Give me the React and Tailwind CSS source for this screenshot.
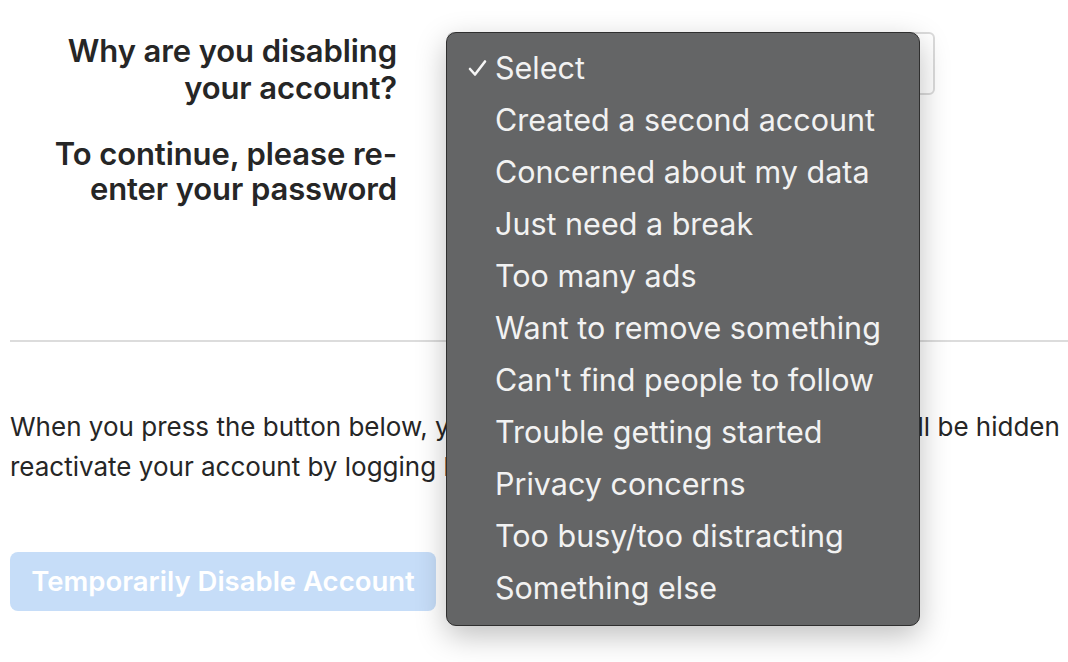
import React from "react";

const REASONS = [
  "Select",
  "Created a second account",
  "Concerned about my data",
  "Just need a break",
  "Too many ads",
  "Want to remove something",
  "Can't find people to follow",
  "Trouble getting started",
  "Privacy concerns",
  "Too busy/too distracting",
  "Something else",
];

const font = { fontFamily: "Inter, 'Liberation Sans', sans-serif" };

export default function App() {
  return (
    <div className="relative h-[662px] w-[1068px] overflow-hidden bg-white text-[#262626]" style={font}>
      {/* form rows */}
      <div className="grid grid-cols-[397px_488px] gap-x-[50px] pt-[32px]">
        <div className="text-right text-[31px] font-semibold leading-[37px] tracking-[-0.1px]">
          Why are you disabling
          <br />
          your account?
        </div>
        <div className="h-[63px] rounded-md border-2 border-[#dbdbdb] bg-white" />
        <div className="mt-[30px] text-right text-[31px] font-semibold leading-[35px] tracking-[-0.1px]">
          To continue, please re-
          <br />
          enter your password
        </div>
        <div />
      </div>

      <div className="ml-[10px] mt-[134px] h-[2px] bg-[#dcdcdc]" />

      <p className="ml-[10px] mt-[65px] whitespace-nowrap text-[26px] leading-[40px]">
        When you press the button below, your photos, comments, and all likes will be hidden
        <br />
        reactivate your account by logging back in.
      </p>

      <button className="ml-[10px] mt-[65px] h-[59px] w-[426px] rounded-lg bg-[#c6ddf8] text-[27.5px] font-semibold text-white">
        Temporarily Disable Account
      </button>

      {/* native select popup */}
      <div className="absolute left-[446px] top-[32px] w-[474px] rounded-[10px] border border-[#2f2f2f] bg-[#646566] pb-[11px] pt-[9px] shadow-[0_10px_30px_rgba(0,0,0,0.25)]">
        {REASONS.map((r, i) => (
          <div key={r} className="flex h-[52px] items-center text-[30.5px] text-[#f2f2f2]">
            <span className="w-[48px] pl-[21px]">
              {i === 0 ? (
                <svg width="19" height="18" viewBox="0 0 19 18" fill="none">
                  <path d="M2 10 L7 15.5 L17 2.5" stroke="#f5f5f5" strokeWidth="2.6" strokeLinecap="round" strokeLinejoin="round" />
                </svg>
              ) : null}
            </span>
            <span>{r}</span>
          </div>
        ))}
      </div>
    </div>
  );
}
